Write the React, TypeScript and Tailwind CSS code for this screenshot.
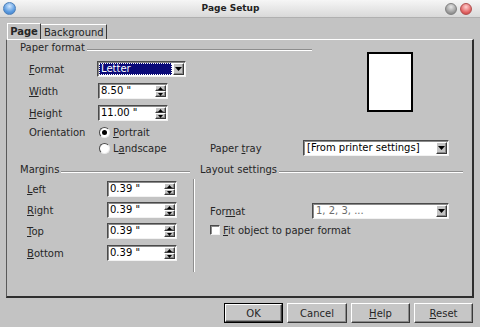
import React from 'react';

// Page Setup dialog — old X11 / OpenOffice style

const U = ({ children }: { children: React.ReactNode }) => <span className="underline underline-offset-[1px]">{children}</span>;

const Etched = ({ className = '' }: { className?: string }) => (
  <div className={`h-0 border-t border-t-[#8e8e8e] border-b border-b-white ${className}`} />
);

const GroupHeader = ({ title, className = '' }: { title: string; className?: string }) => (
  <div className={`flex items-center h-[12px] ${className}`}>
    <span className="leading-[12px] whitespace-nowrap">{title}</span>
    <Etched className="flex-1 ml-[2px] mt-[4px]" />
  </div>
);

const Sunken = 'border-t border-l border-t-[#4a4a4a] border-l-[#4a4a4a] border-b border-r border-b-[#f2f2f2] border-r-[#f2f2f2] shadow-[inset_1px_1px_0_#8a8a8a]';
const Raised = 'border-t border-l border-t-white border-l-white border-b border-r border-b-[#3a3a3a] border-r-[#3a3a3a] shadow-[inset_-1px_-1px_0_#8a8a8a]';

const Arrow = ({ up = false, small = false }: { up?: boolean; small?: boolean }) => (
  <svg width={small ? 5 : 7} height={small ? 3 : 4} viewBox={small ? '0 0 5 3' : '0 0 7 4'}>
    {up
      ? <polygon points={small ? '0,3 5,3 2.5,0' : '0,4 7,4 3.5,0'} fill="#000" />
      : <polygon points={small ? '0,0 5,0 2.5,3' : '0,0 7,0 3.5,4'} fill="#000" />}
  </svg>
);

const Spin = ({ value, className = '' }: { value: string; className?: string }) => (
  <div className={`flex h-[16px] w-[70px] bg-white ${Sunken} ${className}`}>
    <div className="flex-1 pl-[2px] leading-[13px] text-black">{value}</div>
    <div className="w-[11px] flex flex-col bg-[#c3c3c3] mr-[1px] my-[1px]">
      <div className={`flex-1 flex items-center justify-center ${Raised}`}><Arrow up small /></div>
      <div className={`flex-1 flex items-center justify-center ${Raised}`}><Arrow small /></div>
    </div>
  </div>
);

const Select = ({ value, width, focused = false, muted = false }: { value: string; width: string; focused?: boolean; muted?: boolean }) => (
  <div className={`flex h-[16px] ${width} bg-white ${Sunken}`}>
    <div className={`flex-1 m-[1px] flex items-center ${focused ? 'bg-[#0a0a78] text-white outline outline-1 outline-dotted outline-white -outline-offset-1' : muted ? 'text-[#6b6b6b]' : 'text-black'}`}>
      <span className="pl-[2px] leading-[12px]">{value}</span>
    </div>
    <div className={`w-[11px] my-[1px] mr-[1px] flex items-center justify-center bg-[#c3c3c3] ${Raised}`}>
      <Arrow />
    </div>
  </div>
);

const Radio = ({ checked = false }: { checked?: boolean }) => (
  <div className="w-[11px] h-[11px] rounded-full bg-white border border-t-[#4a4a4a] border-l-[#4a4a4a] border-b-[#eaeaea] border-r-[#eaeaea] flex items-center justify-center">
    {checked && <div className="w-[5px] h-[5px] rounded-full bg-black" />}
  </div>
);

const Button = ({ children, isDefault = false, w }: { children: React.ReactNode; isDefault?: boolean; w: string }) => (
  <div className={`${w} h-[20px] ${isDefault ? 'border border-black' : ''}`}>
    <div className={`w-full h-full flex items-center justify-center bg-[#c6c6c6] ${Raised}`}>{children}</div>
  </div>
);

export default function App() {
  return (
    <div
      className="w-[480px] h-[327px] bg-[#c3c3c3] flex flex-col overflow-hidden text-[10px] text-[#262626]"
      style={{ fontFamily: '"DejaVu Sans", "Liberation Sans", sans-serif' }}
    >
      {/* title bar */}
      <div className="h-[18px] flex items-center bg-gradient-to-b from-[#f6f6f6] to-[#d9d9d9] border-b border-b-[#b0b0b0]">
        <div className="ml-[3px] w-[13px] h-[13px] rounded-full bg-[radial-gradient(circle_at_50%_30%,#cfe6ff,#5b9be0_60%,#3a78c2)] border border-[#4d7fb8]" />
        <div className="flex-1 text-center font-bold text-[9px] text-[#222]">Page Setup</div>
        <div className="w-[12px] h-[12px] rounded-full bg-[radial-gradient(circle_at_50%_30%,#e6e6e6,#9a9a9a_65%,#7a7a7a)] border border-[#808080]" />
        <div className="ml-[3px] mr-[8px] w-[12px] h-[12px] rounded-full bg-[radial-gradient(circle_at_50%_30%,#ffd0d0,#e06060_65%,#c04040)] border border-[#b05050]" />
      </div>

      <div className="flex-1 flex flex-col px-[6px]">
        {/* tabs */}
        <div className="flex items-end h-[16px] mt-[5px]">
          <div className="h-[16px] w-[34px] ml-[1px] flex items-center justify-center font-bold border-t border-l border-t-white border-l-white border-r border-r-[#3a3a3a] bg-[#c3c3c3]">
            Page
          </div>
          <div className="h-[15px] w-[66px] flex items-center pl-[3px] border-t border-t-white border-r border-r-[#3a3a3a] text-[#222]">
            Background
          </div>
        </div>

        {/* pane */}
        <div className="h-[259px] flex flex-col border-t border-l border-t-white border-l-[#5a5a5a] border-r-2 border-b-2 border-r-[#2e2e2e] border-b-[#2e2e2e]">
          <div className="flex">
            <div className="w-[305px]">
              <GroupHeader title="Paper format" className="mt-[2px] pl-[13px]" />
              <div className="pl-[22px]">
                <div className="flex items-center h-[16px] mt-[7px]">
                  <span className="w-[68px]"><U>F</U>ormat</span>
                  <Select value="Letter" width="w-[89px]" focused />
                </div>
                <div className="flex items-center h-[16px] mt-[6px]">
                  <span className="w-[69px]"><U>W</U>idth</span>
                  <Spin value={'8.50 "'} />
                </div>
                <div className="flex items-center h-[16px] mt-[6px]">
                  <span className="w-[69px]"><U>H</U>eight</span>
                  <Spin value={'11.00 "'} />
                </div>
                <div className="flex items-center h-[14px] mt-[4px]">
                  <span className="w-[70px]">Orientation</span>
                  <Radio checked />
                  <span className="ml-[3px]"><U>P</U>ortrait</span>
                </div>
              </div>
            </div>
            <div className="ml-[55px] mt-[12px] w-[46px] h-[60px] bg-white border-2 border-black" />
          </div>

          <div className="flex items-center h-[16px] mt-[1px] pl-[92px]">
            <Radio />
            <span className="ml-[3px] w-[97px]">L<U>a</U>ndscape</span>
            <span className="w-[93px]">Paper <U>t</U>ray</span>
            <Select value="[From printer settings]" width="w-[146px]" />
          </div>

          <div className="flex">
            <div className="w-[186px]">
              <GroupHeader title="Margins" className="mt-[8px] pl-[13px] pr-[3px]" />
              <div className="pl-[20px]">
                {[
                  ['L', 'eft', 'mt-[5px]'],
                  ['R', 'ight', 'mt-[5px]'],
                  ['T', 'op', 'mt-[5px]'],
                  ['B', 'ottom', 'mt-[6px]'],
                ].map(([k, rest, mt]) => (
                  <div key={k} className={`flex items-center h-[16px] ${mt}`}>
                    <span className="w-[80px]"><U>{k}</U>{rest}</span>
                    <Spin value={'0.39 "'} />
                  </div>
                ))}
              </div>
            </div>
            <div className="mt-[23px] h-[93px] w-0 border-l border-l-[#8e8e8e] border-r border-r-white" />
            <div className="flex-1">
              <GroupHeader title="Layout settings" className="mt-[8px] pl-[5px] pr-[9px]" />
              <div className="pl-[15px]">
                <div className="flex items-center h-[16px] mt-[27px]">
                  <span className="w-[102px]">For<U>m</U>at</span>
                  <Select value="1, 2, 3, ..." width="w-[137px]" muted />
                </div>
                <div className="flex items-center h-[12px] mt-[5px]">
                  <div className={`w-[10px] h-[10px] bg-white ${Sunken}`} />
                  <span className="ml-[3px]"><U>F</U>it object to paper format</span>
                </div>
              </div>
            </div>
          </div>
        </div>

        {/* buttons */}
        <div className="flex justify-end gap-[4px] mt-[5px] pr-[1px]">
          <Button w="w-[59px]" isDefault>OK</Button>
          <Button w="w-[60px]">Cancel</Button>
          <Button w="w-[59px]"><span><U>H</U>elp</span></Button>
          <Button w="w-[59px]"><span><U>R</U>eset</span></Button>
        </div>
      </div>
    </div>
  );
}
